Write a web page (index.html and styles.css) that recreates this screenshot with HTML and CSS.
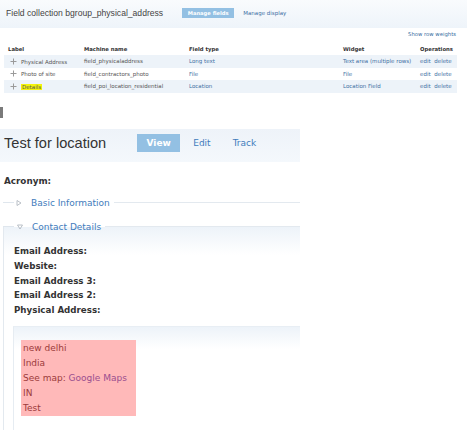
FILE: index.html
```html
<!DOCTYPE html>
<html lang="en">
<head>
    <meta charset="UTF-8">
    <title>Field collection / Test for location</title>
    <link rel="stylesheet" href="styles.css">
</head>
<body>

<div class="fc">
    <div class="fc-head">
        <h1>Field collection bgroup_physical_address</h1>
        <a href="#" class="tab-active">Manage fields</a>
        <a href="#" class="tab">Manage display</a>
    </div>
    <div class="weights"><a href="#">Show row weights</a></div>
    <table class="fields">
        <tr>
            <th class="c1">Label</th>
            <th class="c2">Machine name</th>
            <th class="c3">Field type</th>
            <th class="c4">Widget</th>
            <th class="c5">Operations</th>
        </tr>
        <tr class="odd">
            <td><span class="handle"><svg width="7" height="7" viewBox="0 0 7 7"><path d="M3.5 0.5v6M0.5 3.5h6" stroke="#9a9a9a" stroke-width="1"/></svg></span>Physical Address</td>
            <td>field_physicaladdress</td>
            <td><a href="#">Long text</a></td>
            <td><a href="#">Text area (multiple rows)</a></td>
            <td><a href="#">edit</a> <a href="#">delete</a></td>
        </tr>
        <tr>
            <td><span class="handle"><svg width="7" height="7" viewBox="0 0 7 7"><path d="M3.5 0.5v6M0.5 3.5h6" stroke="#9a9a9a" stroke-width="1"/></svg></span>Photo of site</td>
            <td>field_contractors_photo</td>
            <td><a href="#">File</a></td>
            <td><a href="#">File</a></td>
            <td><a href="#">edit</a> <a href="#">delete</a></td>
        </tr>
        <tr class="odd">
            <td><span class="handle"><svg width="7" height="7" viewBox="0 0 7 7"><path d="M3.5 0.5v6M0.5 3.5h6" stroke="#9a9a9a" stroke-width="1"/></svg></span><span class="hl">Details</span></td>
            <td>field_poi_location_residential</td>
            <td><a href="#">Location</a></td>
            <td><a href="#">Location Field</a></td>
            <td><a href="#">edit</a> <a href="#">delete</a></td>
        </tr>
    </table>
</div>

<div class="divider"></div>

<div class="node">
    <div class="node-head">
        <h2>Test for location</h2>
        <a href="#" class="tab-active">View</a>
        <a href="#" class="tab">Edit</a>
        <a href="#" class="tab">Track</a>
    </div>

    <div class="acronym">Acronym:</div>

    <div class="fieldset">
        <div class="legend">
            <svg class="tri" width="6" height="6" viewBox="0 0 6 6"><path d="M1 0.5L5 3L1 5.5Z" fill="none" stroke="#a9b1ba" stroke-width="0.8"/></svg>
            <a href="#">Basic Information</a>
        </div>
    </div>

    <div class="fieldset open">
        <div class="legend">
            <svg class="tri" width="6" height="6" viewBox="0 0 6 6"><path d="M0.5 1L5.5 1L3 5Z" fill="none" stroke="#a9b1ba" stroke-width="0.8"/></svg>
            <a href="#">Contact Details</a>
        </div>
        <div class="fields-list">
            <div class="label">Email Address:</div>
            <div class="label">Website:</div>
            <div class="label">Email Address 3:</div>
            <div class="label">Email Address 2:</div>
            <div class="label">Physical Address:</div>
            <div class="sub">
                <div class="location">
                    <div>new delhi</div>
                    <div>India</div>
                    <div>See map: <a href="#">Google Maps</a></div>
                    <div>IN</div>
                    <div>Test</div>
                </div>
            </div>
        </div>
    </div>
</div>

</body>
</html>
```

FILE: styles.css
```css
body {
    margin: 0;
    font-family: 'DejaVu Sans', Verdana, sans-serif;
    color: #333;
    background: #fff;
}
a {
    text-decoration: none;
}

/* field collection screen */
.fc {
    width: 467px;
}
.fc-head {
    display: flex;
    align-items: center;
    height: 13px;
    padding: 6px 0 9px 6px;
    background: linear-gradient(#f9fbfd, #eef4fa);
}
.fc-head h1 {
    margin: 0 19px 0 0;
    font-family: 'Liberation Sans', Arial, sans-serif;
    font-size: 8.6px;
    font-weight: normal;
    color: #444;
}
.fc-head .tab-active {
    width: 52px;
    height: 10px;
    line-height: 10px;
    text-align: center;
    background: #93c0e3;
    color: #fff;
    font-size: 5.2px;
    font-weight: bold;
}
.fc-head .tab {
    margin-left: 9px;
    color: #3d6fa3;
    font-size: 5.5px;
}
.weights {
    text-align: right;
    padding: 1px 11px 0 0;
    height: 10px;
    line-height: 10px;
    font-size: 5.3px;
}
.weights a {
    color: #3d6fa3;
}
.fields {
    margin: 3px 0 0 4px;
    border-collapse: collapse;
    font-size: 5.5px;
    color: #555;
}
.fields th {
    height: 13px;
    padding: 0 4px;
    text-align: left;
    font-weight: bold;
    color: #333;
    font-size: 5.3px;
}
.fields td {
    height: 12.5px;
    padding: 0 4px;
    white-space: nowrap;
}
.fields .c1 { width: 68px; }
.fields .c2 { width: 97px; }
.fields .c3 { width: 146px; }
.fields .c4 { width: 69px; }
.fields .c5 { width: 33px; }
.fields tr.odd td {
    background: #edf3f9;
}
.fields a {
    color: #3d6fa3;
}
.fields td:last-child a + a {
    margin-left: 2px;
}
.handle {
    display: inline-block;
    width: 7px;
    height: 7px;
    margin: 0 4px 0 2px;
    vertical-align: -1px;
}
.handle svg {
    display: block;
}
.hl {
    background: #f4f40a;
    padding: 0 1px;
}
.divider {
    width: 3px;
    height: 11px;
    margin-top: 14px;
    background: #7a7a7a;
}

/* node view */
.node {
    width: 300px;
    margin-top: 11px;
}
.node-head {
    display: flex;
    align-items: center;
    height: 29px;
    padding: 0 0 4px 4px;
    background: linear-gradient(#eef3f9, #f4f8fc);
}
.node-head h2 {
    margin: 0 31px 0 0;
    font-family: 'Liberation Sans', Arial, sans-serif;
    font-size: 14.6px;
    font-weight: normal;
    color: #333;
}
.node-head .tab-active {
    width: 43px;
    height: 18px;
    line-height: 18px;
    text-align: center;
    background: #93c0e3;
    color: #fff;
    font-size: 9px;
    font-weight: bold;
}
.node-head .tab {
    margin-left: 13px;
    color: #3f7cbc;
    font-size: 9px;
}
.node-head .tab + .tab {
    margin-left: 22px;
}
.acronym {
    margin: 12px 0 0 4px;
    line-height: 15px;
    font-size: 8.8px;
    font-weight: bold;
}
.fieldset {
    margin: 6px 0 0 3px;
}
.fieldset.open {
    margin-top: 8px;
    background:
        linear-gradient(#e3e9ef, #e3e9ef) no-repeat 0 8px / 1px 100%,
        linear-gradient(#fff 0 8px, #edf3f9 8px, #fff 36px);
}
.legend {
    display: flex;
    align-items: center;
    height: 16px;
    font-size: 9px;
}
.legend::before {
    content: "";
    width: 11px;
    border-top: 1px solid #dfe6ed;
}
.legend::after {
    content: "";
    flex: 1;
    border-top: 1px solid #e3e9ef;
    margin-left: 4px;
}
.legend .tri {
    margin: 0 9px 0 2px;
}
.open .legend .tri {
    margin-left: 3px;
    margin-right: 9px;
}
.legend a {
    color: #3f7cbc;
}
.fields-list {
    padding: 9.6px 0 0 11px;
}
.label {
    line-height: 14.8px;
    font-size: 8.7px;
    font-weight: bold;
}
.sub {
    margin: 8px 0 0 -1px;
    padding: 13px 0 15px 7px;
    border-top: 1px solid #e8eef4;
    border-left: 1px solid #e6ecf2;
    background: linear-gradient(#edf3f9, #fff 22px);
}
.location {
    width: 113px;
    padding: 0.5px 0 0 2px;
    background: #ffb9b9;
    color: #9c3b3b;
    font-size: 9px;
    line-height: 15px;
}
.location a {
    color: #9a4f8f;
}
```
